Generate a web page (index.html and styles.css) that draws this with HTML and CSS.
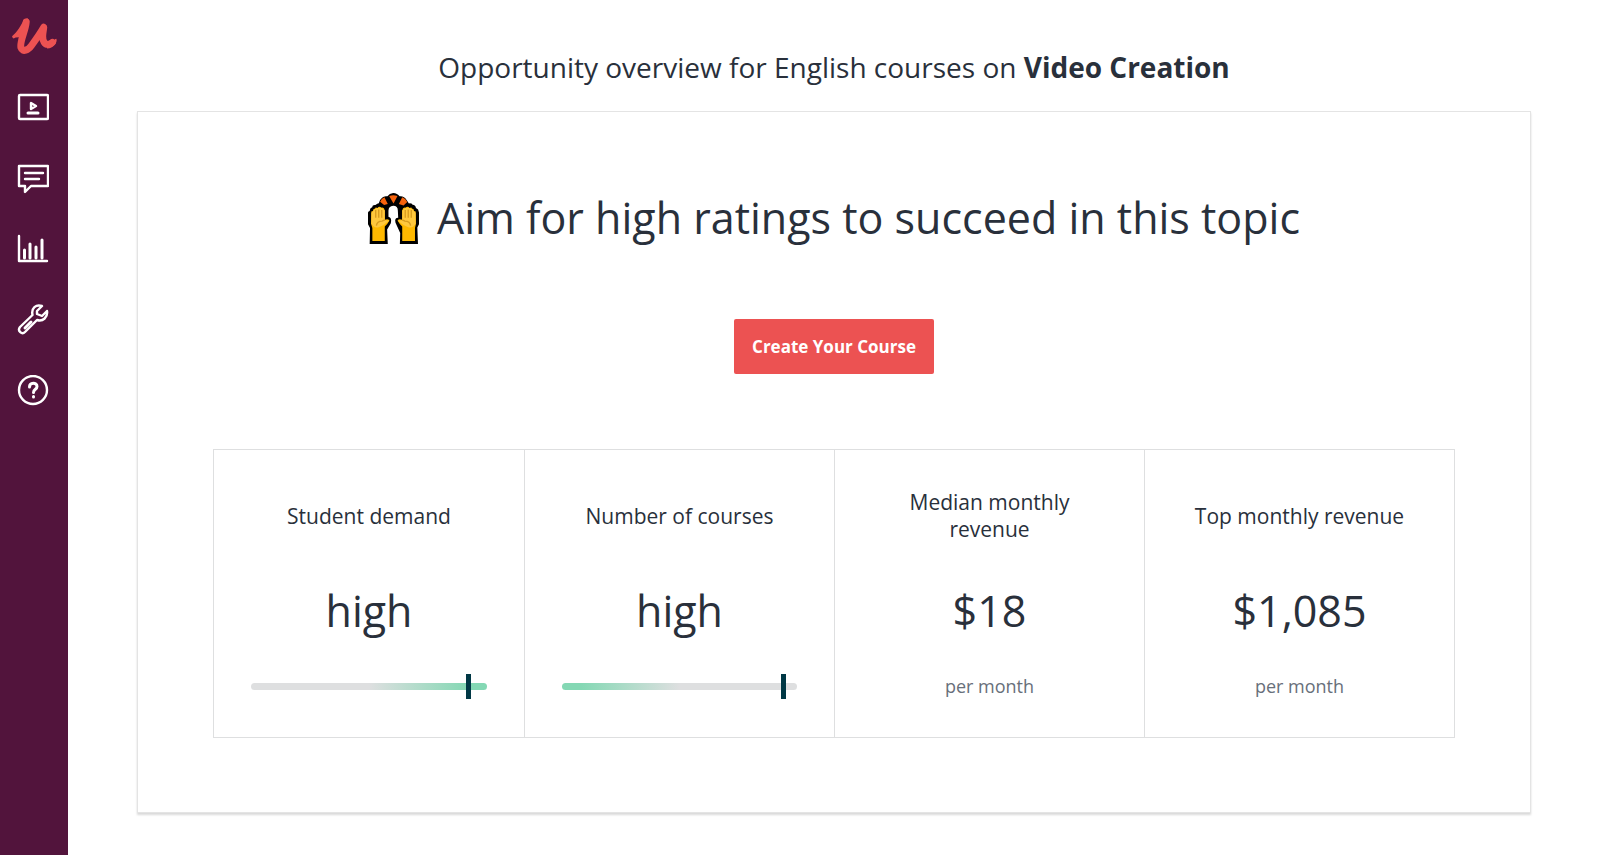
FILE: index.html
```
<!DOCTYPE html>
<html lang="en">
<head>
  <meta charset="UTF-8">
  <meta name="viewport" content="width=device-width, initial-scale=1.0">
  <title>Marketplace Insights</title>
  <link rel="stylesheet" href="styles.css">
</head>
<body>
  <nav class="sidebar" aria-label="Instructor">
    <a class="logo" href="#" aria-label="Home">
      <svg viewBox="36 53 136 112" width="45" height="37" fill="none" stroke="#ec5252" stroke-linecap="round" stroke-linejoin="round">
        <path d="M36 108C52 96 63 76 69 63Q75 54 83 54L88 62Q80 98 66 124L56 118L57 111Q45 111 41 115Q37 113 36 108Z" fill="#ec5252" stroke="none"/>
        <path stroke-width="21" d="M79 65C77 92 58 126 63 143C68 158 85 150 95 136C109 117 121 100 132 81C131 96 124 112 133 126C139 136 150 134 158 127"/>
        <path d="M170 116Q173 121 168 130Q158 145 142 145L140 132Q154 133 161 122Q166 116 170 116Z" fill="#ec5252" stroke="none"/>
      </svg>
    </a>
    <a class="nav-item" href="#" aria-label="Courses">
      <svg viewBox="0 0 32 32" width="32" height="32">
        <rect x="2" y="4" width="29" height="24" rx="1"/>
        <path d="M14 12v6l5-3z"/>
        <path class="thick" d="M11 22h10"/>
      </svg>
    </a>
    <a class="nav-item" href="#" aria-label="Communication">
      <svg viewBox="0 1 32 32" width="32" height="32">
        <path d="M2 5h29v20H14l-6 6v-6H2z"/>
        <path d="M8 12h18M8 18h14"/>
      </svg>
    </a>
    <a class="nav-item" href="#" aria-label="Performance">
      <svg viewBox="0 0 32 32" width="32" height="32">
        <path d="M2 3v25h28"/>
        <path class="bars" d="M7.500 17v8M13 11v14M19 14v11M25 7v18"/>
      </svg>
    </a>
    <a class="nav-item" href="#" aria-label="Tools">
      <svg viewBox="0 1 32 32" width="32" height="32">
        <path d="M25 3C19 1 14 5 15.500 12L3 24C0 28 5 32 8 29L20 17C26 19 31 14 30 8L25 13L20 11L20 8Z"/>
        <path class="thick" d="M8 25L14 19"/>
      </svg>
    </a>
    <a class="nav-item" href="#" aria-label="Resources">
      <svg viewBox="0 1 32 32" width="32" height="32">
        <circle cx="16" cy="16" r="14"/>
        <path class="thick" d="M12.500 13C12.500 8 20 8 20 12.500C20 15.500 16.500 15 16.500 18.500M16.500 22.500v.5"/>
      </svg>
    </a>
  </nav>

  <main class="content">
    <h1 class="page-title">Opportunity overview for English courses on <b>Video Creation</b></h1>

    <section class="card">
      <h2 class="headline">
        <svg class="hands" viewBox="30 24 152 152" width="51" height="51" role="img" aria-label="Raising hands">
          <path d="M35 78Q36 68 42 67Q43 59 52 60Q60 54 62 55Q63 45 72 38Q78 32 88 34Q94 25 105 24Q118 25 124 34Q137 32 145 45L152 55Q160 54 163 59Q172 60 173 69Q181 72 182 82V117L177 127L179 176H125L126 143L112 113Q108 98 120 98L119 77Q119 62 105 62Q91 64 91 77V95Q102 98 98 114L87 133L89 176H35L36 128L30 117V82Q31 79 35 78Z" fill="#000"/>
          <path d="M66 50Q70 41 79 37L89 57L78 60ZM93 33Q105 29 118 33L106 55ZM132 37Q142 41 147 51L136 61L122 57Z" fill="#f7630c"/>
          <path d="M40 82Q40 76 45 79Q44 69 51 71Q52 64 58 69Q64 61 70 68Q78 65 80 76V104Q89 99 94 106Q88 117 80 124V167H43V128L39 116Z" fill="#ffb900"/>
          <path d="M172 82Q172 76 167 79Q168 69 161 71Q160 64 154 69Q148 61 142 68Q134 65 132 76V104Q123 99 118 106Q124 117 132 124V167H170V128L173 116Z" fill="#ffb900"/>
          <path d="M40 83V116Q48 130 62 126Q79 120 93 107L80 105V76L70 68L58 69L51 72Z" fill="#ffc83d"/>
          <path d="M172 83V116Q164 130 150 126Q133 120 119 107L132 105V76L142 68L154 69L161 72Z" fill="#ffc83d"/>
          <path d="M53 75V98M62 73V98M71 75V98M55 121Q57 108 72 108L80 104M159 75V98M150 73V98M141 75V98M157 121Q155 108 140 108L132 104" fill="none" stroke="#d79b1f" stroke-width="4"/>
        </svg>
        <span>Aim for high ratings to succeed in this topic</span>
      </h2>

      <button class="create-button" type="button">Create Your Course</button>

      <div class="metrics">
        <div class="metric">
          <h3 class="metric-label">Student demand</h3>
          <div class="metric-value">high</div>
          <div class="metric-footer">
            <div class="scale scale-demand"><span class="marker" style="left: 91%"></span></div>
          </div>
        </div>
        <div class="metric">
          <h3 class="metric-label">Number of courses</h3>
          <div class="metric-value">high</div>
          <div class="metric-footer">
            <div class="scale scale-courses"><span class="marker" style="left: 93%"></span></div>
          </div>
        </div>
        <div class="metric">
          <h3 class="metric-label">Median monthly revenue</h3>
          <div class="metric-value">$18</div>
          <div class="metric-footer">per month</div>
        </div>
        <div class="metric">
          <h3 class="metric-label">Top monthly revenue</h3>
          <div class="metric-value">$1,085</div>
          <div class="metric-footer">per month</div>
        </div>
      </div>
    </section>
  </main>
</body>
</html>
```
FILE: styles.css
```
* {
  box-sizing: border-box;
}
body {
  display: flex;
  min-height: 100vh;
  margin: 0;
  background: #fff;
  color: #29303b;
  font-family: "Segoe UI", "Open Sans", "Noto Sans", sans-serif;
}
h1, h2, h3 {
  margin: 0;
  font-weight: 400;
}

/* sidebar */
.sidebar {
  display: flex;
  flex-direction: column;
  flex: none;
  width: 68px;
  background: #52143c;
}
.logo,
.nav-item {
  display: flex;
  align-items: center;
  justify-content: center;
  height: 71px;
}
.logo {
  padding-top: 2px;
}
.nav-item {
  padding-right: 2px;
}
.nav-item svg {
  fill: none;
  stroke: #fff;
  stroke-width: 2.4;
  stroke-linecap: round;
  stroke-linejoin: round;
}
.nav-item .bars,
.nav-item .thick {
  stroke-width: 3;
}

/* overview */
.content {
  flex: 1;
  min-width: 0;
  padding: 47px 68px 40px 69px;
  text-align: center;
}
.page-title {
  margin-bottom: 24px;
  font-size: 28px;
  line-height: 40px;
}
.card {
  padding: 72px 75px 74px;
  border: 1px solid #e4e4e4;
  box-shadow: 0 2px 2px rgba(0, 0, 0, 0.15);
}
.headline {
  display: flex;
  align-items: center;
  justify-content: center;
  gap: 18px;
  font-size: 43px;
  line-height: 68px;
}
.hands {
  flex: none;
}
.create-button {
  height: 55px;
  margin: 67px 0 75px;
  padding: 0 18px;
  border: 0;
  border-radius: 2px;
  background: #ec5252;
  color: #fff;
  font: 700 17px "Segoe UI", "Open Sans", "Noto Sans", sans-serif;
  cursor: pointer;
}
.metrics {
  display: grid;
  grid-template-columns: repeat(4, 1fr);
  border: 1px solid #dedfe0;
}
.metric {
  padding: 39px 37px;
}
.metric + .metric {
  border-left: 1px solid #dedfe0;
}
.metric-label {
  display: flex;
  align-items: center;
  justify-content: center;
  height: 54px;
  font-size: 21px;
  line-height: 27px;
}
.metric-value {
  margin: 38px 0 33px;
  font-size: 43px;
  line-height: 60px;
}
.metric-footer {
  display: flex;
  align-items: center;
  justify-content: center;
  height: 24px;
  color: #686f7a;
  font-size: 18px;
}
.scale {
  position: relative;
  width: 100%;
  height: 7px;
  border-radius: 4px;
}
.scale-demand {
  background: linear-gradient(to right, #dedfe0 50%, #84d8b4 92%);
}
.scale-courses {
  background: linear-gradient(to right, #84d8b4 8%, #dedfe0 50%);
}
.marker {
  position: absolute;
  top: -9px;
  width: 5px;
  height: 25px;
  background: #003845;
}
```
